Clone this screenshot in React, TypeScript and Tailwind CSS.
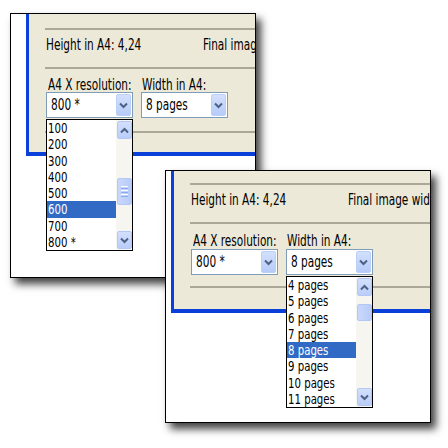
import React from "react";

const FONT =
  "font-['Liberation_Sans_Narrow','DejaVu_Sans_Condensed','Liberation_Sans',sans-serif]";

function T({ children }: { children: React.ReactNode }) {
  return (
    <span className="inline-block origin-left scale-x-[0.78] whitespace-nowrap">{children}</span>
  );
}

function Chevron({ up = false }: { up?: boolean }) {
  return (
    <svg width="9" height="7" viewBox="0 0 9 7">
      <polyline
        points={up ? "1,5.5 4.5,2 8,5.5" : "1,1.5 4.5,5 8,1.5"}
        fill="none"
        stroke="#4d6185"
        strokeWidth="2"
      />
    </svg>
  );
}

function ScrollBtn({ up = false }: { up?: boolean }) {
  return (
    <div className="flex h-[18px] w-[15px] items-center justify-center rounded-[2px] border border-[#b4c8f6] bg-gradient-to-b from-[#d3e0fd] to-[#b9cdf9]">
      <Chevron up={up} />
    </div>
  );
}

type ListProps = {
  items: string[];
  selected: string;
  gapTop: number;
  thumbH: number;
  grip: boolean;
};

function DropList({ items, selected, gapTop, thumbH, grip }: ListProps) {
  return (
    <div className="absolute left-0 top-full z-10 mt-[1px] flex h-[132px] w-full border border-black bg-white">
      <div className="flex flex-1 flex-col">
        {items.map((it) => (
          <div
            key={it}
            className={
              it === selected
                ? "h-[16.25px] overflow-hidden whitespace-nowrap bg-[#316ac5] pl-[1px] text-[14.5px] leading-[16px] text-white"
                : "h-[16.25px] overflow-hidden whitespace-nowrap pl-[1px] text-[14.5px] leading-[16px] text-black"
            }
          >
            <T>{it}</T>
          </div>
        ))}
      </div>
      <div className="flex w-[16px] flex-col items-center bg-[#f6f5f0] py-[1px]">
        <ScrollBtn up />
        <div
          className="flex w-[15px] flex-col items-center justify-center gap-[1px] rounded-[2px] border border-[#b4c8f6] bg-gradient-to-r from-[#c9d8fc] to-[#b8ccf8]"
          style={{ marginTop: gapTop, height: thumbH }}
        >
          {grip && (
            <>
              <div className="h-[1px] w-[7px] bg-white" />
              <div className="h-[1px] w-[7px] bg-[#8faaf0]" />
              <div className="h-[1px] w-[7px] bg-white" />
              <div className="h-[1px] w-[7px] bg-[#8faaf0]" />
              <div className="h-[1px] w-[7px] bg-white" />
              <div className="h-[1px] w-[7px] bg-[#8faaf0]" />
            </>
          )}
        </div>
        <div className="flex-1" />
        <ScrollBtn />
      </div>
    </div>
  );
}

function Combo({ value, children }: { value: string; children?: React.ReactNode }) {
  return (
    <div className="relative w-[87px]">
      <div className="flex h-[26px] items-center border border-[#7f9db9] bg-white pl-[4px] pr-[1px]">
        <span className="flex-1 overflow-visible whitespace-nowrap text-[15px] leading-none text-black">
          <T>{value}</T>
        </span>
        <div className="flex h-[22px] w-[15px] items-center justify-center rounded-[2px] border border-[#bccff7] bg-gradient-to-b from-[#d3e0fd] to-[#b6cbf8]">
          <Chevron />
        </div>
      </div>
      {children}
    </div>
  );
}

function Sep() {
  return <div className="h-[2px] w-full bg-[#aca899]" />;
}

type PanelProps = {
  pos: string;
  inset: string;
  pt: string;
  labelMt: string;
  comboMt: string;
  sep3Mt: string;
  list1?: React.ReactNode;
  list2?: React.ReactNode;
};

function Panel({ pos, inset, pt, labelMt, comboMt, sep3Mt, list1, list2 }: PanelProps) {
  return (
    <div
      className={`absolute overflow-hidden border border-black bg-white shadow-[5px_6px_8px_rgba(0,0,0,0.75)] ${pos}`}
    >
      <div
        className={`h-[142px] w-[420px] border-b-[4px] border-l-[3px] border-[#0a3fd9] bg-[#ece9d8] pl-[16px] ${inset} ${pt}`}
      >
        <Sep />
        <div className="mt-[8px] flex h-[15px] pl-[1px] text-[15px] leading-[15px] text-black">
          <span className="w-[157px] shrink-0">
            <T>Height in A4: 4,24</T>
          </span>
          <span>
            <T>Final image width:</T>
          </span>
        </div>
        <div className="mt-[14px]">
          <Sep />
        </div>
        <div className={`flex gap-[8px] pl-[1px] ${labelMt}`}>
          <div className="flex w-[87px] flex-col">
            <div className="h-[13px] pl-[2px] text-[15px] leading-[13px] text-black">
              <T>A4 X resolution:</T>
            </div>
            <div className={comboMt}>
              <Combo value="800 *">{list1}</Combo>
            </div>
          </div>
          <div className="flex w-[87px] flex-col">
            <div className="h-[13px] pl-[1px] text-[15px] leading-[13px] text-black">
              <T>Width in A4:</T>
            </div>
            <div className={comboMt}>
              <Combo value="8 pages">{list2}</Combo>
            </div>
          </div>
        </div>
        <div className={sep3Mt}>
          <Sep />
        </div>
      </div>
    </div>
  );
}

export default function App() {
  return (
    <div className={`relative h-[448px] w-[448px] overflow-hidden bg-white ${FONT}`}>
      <Panel
        pos="left-[10px] top-[13px] h-[265px] w-[246px]"
        inset="ml-[15px]"
        pt="pt-[14px]"
        labelMt="mt-[10px]"
        comboMt="mt-0"
        sep3Mt="mt-[13px]"
        list1={
          <DropList
            items={["100", "200", "300", "400", "500", "600", "700", "800 *"]}
            selected="600"
            gapTop={39}
            thumbH={27}
            grip
          />
        }
      />
      <Panel
        pos="left-[165px] top-[170px] h-[253px] w-[266px]"
        inset="ml-[5px]"
        pt="pt-[12px]"
        labelMt="mt-[11px]"
        comboMt="mt-[1px]"
        sep3Mt="mt-[11px]"
        list2={
          <DropList
            items={[
              "4 pages",
              "5 pages",
              "6 pages",
              "7 pages",
              "8 pages",
              "9 pages",
              "10 pages",
              "11 pages",
            ]}
            selected="8 pages"
            gapTop={8}
            thumbH={17}
            grip={false}
          />
        }
      />
    </div>
  );
}
